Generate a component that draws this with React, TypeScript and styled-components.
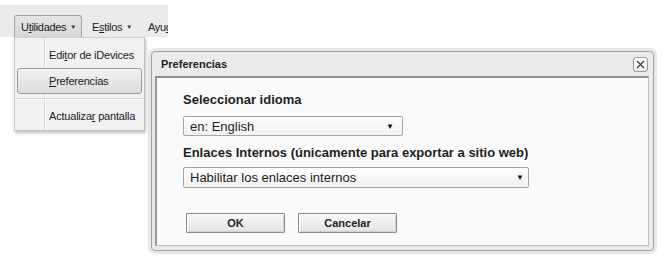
import React from 'react';
import styled, { createGlobalStyle } from 'styled-components';

const GlobalStyle = createGlobalStyle`
  html, body {
    margin: 0;
    padding: 0;
    background: #ffffff;
  }
  body {
    font-family: "Liberation Sans", Arial, sans-serif;
    color: #1a1a1a;
  }
`;

const Page = styled.div`
  width: 668px;
  height: 268px;
  padding-top: 5px;
  box-sizing: border-box;
  overflow: hidden;
`;

const MenuArea = styled.div`
  position: relative;
  width: 168px;
`;

const MenuBar = styled.nav`
  height: 32px;
  box-sizing: border-box;
  padding: 10px 0 0 14px;
  background: #ebebeb;
  display: flex;
  align-items: flex-end;
  gap: 9px;
  white-space: nowrap;
  overflow: hidden;
`;

const MenuItem = styled.div<{ $open?: boolean }>`
  height: 22px;
  box-sizing: border-box;
  display: flex;
  align-items: center;
  gap: 4px;
  padding: 0 5px 0 6px;
  font-size: 11px;
  letter-spacing: -0.3px;
  color: #222;
  border: 1px solid ${(p) => (p.$open ? '#a4a4a4' : 'transparent')};
  border-bottom: none;
  border-radius: 3px 3px 0 0;
  background: ${(p) => (p.$open ? 'linear-gradient(#e6e6e6, #d6d6d6)' : 'transparent')};
  margin-left: ${(p) => (p.$open ? '0' : '-6px')};
`;

const Caret = styled.span`
  font-size: 6px;
  line-height: 1;
  color: #333;
`;

const Dropdown = styled.div`
  position: absolute;
  top: 32px;
  left: 14px;
  width: 131px;
  box-sizing: border-box;
  padding: 4px 0 1px;
  border: 1px solid #c6c6c6;
  border-top-color: #d0d0d0;
  background:
    linear-gradient(
      to right,
      transparent 29px,
      #d8d8d8 29px,
      #d8d8d8 30px,
      #ffffff 30px,
      #ffffff 31px,
      transparent 31px
    ),
    #f1f1f1;
  box-shadow: 1px 2px 3px rgba(0, 0, 0, 0.25);
  z-index: 10;
`;

const DropItem = styled.div<{ $active?: boolean }>`
  height: 26px;
  box-sizing: border-box;
  display: flex;
  align-items: center;
  font-size: 11px;
  letter-spacing: -0.2px;
  white-space: nowrap;
  color: #222;
  margin: 0 ${(p) => (p.$active ? '2px' : '0')};
  padding-left: ${(p) => (p.$active ? '31px' : '34px')};
  border: ${(p) => (p.$active ? '1px solid #9c9c9c' : 'none')};
  border-radius: 3px;
  background: ${(p) => (p.$active ? 'linear-gradient(#f2f2f2, #dcdcdc)' : 'transparent')};
`;

const DropSeparator = styled.div`
  height: 1px;
  margin: 4px 0 3px;
  background: #d8d8d8;
  border-bottom: 1px solid #fbfbfb;
`;

const Key = styled.span`
  text-decoration: underline;
  text-underline-offset: 1px;
`;

const Dialog = styled.section`
  width: 503px;
  height: 200px;
  margin: 14px 0 0 151px;
  box-sizing: border-box;
  display: flex;
  flex-direction: column;
  border: 1px solid #a2a2a2;
  border-radius: 4px;
  background: #ebebeb;
  box-shadow: 0 0 0 3px #e7e7e7;
`;

const TitleBar = styled.header`
  height: 24px;
  flex-shrink: 0;
  display: flex;
  align-items: center;
  justify-content: space-between;
  padding: 0 5px 0 9px;
  h1 {
    margin: 0;
    font-size: 11px;
    font-weight: bold;
    color: #222;
  }
`;

const CloseButton = styled.button`
  width: 15px;
  height: 15px;
  padding: 0;
  display: flex;
  align-items: center;
  justify-content: center;
  border: 1px solid #9a9a9a;
  border-radius: 3px;
  background: linear-gradient(#ffffff, #ececec);
`;

const Panel = styled.div`
  flex: 1;
  margin: 0 4px 4px 3px;
  padding: 14px 0 0 26px;
  box-sizing: border-box;
  background: #fafafa;
  border-top: 2px solid #939393;
  border-left: 2px solid #9a9a9a;
  border-right: 1px solid #ccbcbc;
  border-bottom: 1px solid #ccbcbc;
  display: flex;
  flex-direction: column;
  align-items: flex-start;
`;

const Label = styled.div<{ $gap?: number }>`
  font-size: 13px;
  line-height: 15px;
  font-weight: bold;
  color: #1e1e1e;
  margin-top: ${(p) => p.$gap ?? 0}px;
`;

const Select = styled.div<{ $width: number; $height: number; $gap: number; $arrowPad: number }>`
  width: ${(p) => p.$width}px;
  height: ${(p) => p.$height}px;
  margin-top: ${(p) => p.$gap}px;
  box-sizing: border-box;
  display: flex;
  align-items: center;
  justify-content: space-between;
  padding: 0 ${(p) => p.$arrowPad}px 0 6px;
  font-size: 13px;
  color: #1e1e1e;
  border: 1px solid #a6a6a6;
  border-radius: 2px;
  background: linear-gradient(#ffffff, #f0f0f0);
`;

const Arrow = styled.span`
  font-size: 8px;
  color: #111;
`;

const ButtonRow = styled.div`
  display: flex;
  gap: 13px;
  margin: 25px 0 0 3px;
`;

const DialogButton = styled.button`
  width: 99px;
  height: 20px;
  padding: 0;
  font-family: "Liberation Sans", Arial, sans-serif;
  font-size: 11px;
  font-weight: bold;
  color: #222;
  border: 1px solid #8c8c8c;
  border-radius: 1px;
  background: linear-gradient(#f8f8f8, #e4e4e4);
  box-shadow: inset 1px 1px 0 #ffffff, inset -1px -1px 0 #d0d0d0;
`;

const App: React.FC = () => {
  return (
    <>
      <GlobalStyle />
      <Page>
        <MenuArea>
          <MenuBar>
            <MenuItem $open>
              <span>
                U<Key>t</Key>ilidades
              </span>
              <Caret>▼</Caret>
            </MenuItem>
            <MenuItem>
              <span>
                E<Key>s</Key>tilos
              </span>
              <Caret>▼</Caret>
            </MenuItem>
            <MenuItem>
              <span>
                Ayu<Key>d</Key>a
              </span>
            </MenuItem>
          </MenuBar>
          <Dropdown>
            <DropItem>
              <span>
                Edi<Key>t</Key>or de iDevices
              </span>
            </DropItem>
            <DropItem $active>
              <span>
                <Key>P</Key>referencias
              </span>
            </DropItem>
            <DropSeparator />
            <DropItem>
              <span>
                Actualiza<Key>r</Key> pantalla
              </span>
            </DropItem>
          </Dropdown>
        </MenuArea>

        <Dialog>
          <TitleBar>
            <h1>Preferencias</h1>
            <CloseButton aria-label="Cerrar">
              <svg width="9" height="9" viewBox="0 0 9 9">
                <path d="M1 1 L8 8 M8 1 L1 8" stroke="#333" strokeWidth="1.1" />
              </svg>
            </CloseButton>
          </TitleBar>
          <Panel>
            <Label>Seleccionar idioma</Label>
            <Select $width={220} $height={20} $gap={9} $arrowPad={8}>
              <span>en: English</span>
              <Arrow>▼</Arrow>
            </Select>
            <Label $gap={9}>Enlaces Internos (únicamente para exportar a sitio web)</Label>
            <Select $width={346} $height={21} $gap={7} $arrowPad={4}>
              <span>Habilitar los enlaces internos</span>
              <Arrow>▼</Arrow>
            </Select>
            <ButtonRow>
              <DialogButton>OK</DialogButton>
              <DialogButton>Cancelar</DialogButton>
            </ButtonRow>
          </Panel>
        </Dialog>
      </Page>
    </>
  );
};

export default App;
